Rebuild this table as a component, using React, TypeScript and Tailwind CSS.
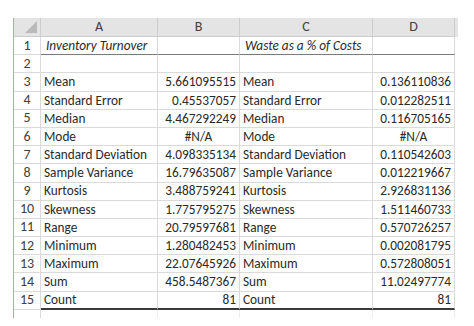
import React from "react";

const rows: [string, string, string, string][] = [
  ["Mean", "5.661095515", "Mean", "0.136110836"],
  ["Standard Error", "0.45537057", "Standard Error", "0.012282511"],
  ["Median", "4.467292249", "Median", "0.116705165"],
  ["Mode", "#N/A", "Mode", "#N/A"],
  ["Standard Deviation", "4.098335134", "Standard Deviation", "0.110542603"],
  ["Sample Variance", "16.79635087", "Sample Variance", "0.012219667"],
  ["Kurtosis", "3.488759241", "Kurtosis", "2.926831136"],
  ["Skewness", "1.775795275", "Skewness", "1.511460733"],
  ["Range", "20.79597681", "Range", "0.570726257"],
  ["Minimum", "1.280482453", "Minimum", "0.002081795"],
  ["Maximum", "22.07645926", "Maximum", "0.572808051"],
  ["Sum", "458.5487367", "Sum", "11.02497774"],
  ["Count", "81", "Count", "81"],
];

const cols = "grid grid-cols-[27px_117px_82px_133px_82px]";

function Cell({
  children,
  className = "",
}: {
  children?: React.ReactNode;
  className?: string;
}) {
  return (
    <div
      className={`h-[18.2px] flex items-center border-b border-r border-[#dadada] whitespace-nowrap overflow-visible ${className}`}
    >
      {children}
    </div>
  );
}

export default function App() {
  return (
    <div
      className="w-[474px] h-[326px] bg-white overflow-hidden pt-[18px] pl-[13px] text-[#2a2a2a] text-[13.3px] leading-none"
      style={{ fontFamily: "Calibri, Carlito, Lato, sans-serif" }}
    >
      <div className="w-[441px] border-l border-[#9fb39f]">
        {/* header */}
        <div className={`${cols} h-[19px] bg-[#e4e4e4] text-[#404040] text-[14px] w-[444px]`}>
          <div className="relative border-r border-b border-[#cccccc]">
            <svg
              className="absolute right-[3px] bottom-[3px]"
              width="12"
              height="12"
              viewBox="0 0 12 12"
            >
              <polygon points="12,0 12,12 0,12" fill="#bababa" />
            </svg>
          </div>
          {["A", "B", "C", "D"].map((c) => (
            <div
              key={c}
              className="flex items-center justify-center border-r border-b border-[#cccccc]"
            >
              {c}
            </div>
          ))}
        </div>
        {/* row 1 */}
        <div className={cols}>
          <Cell className="justify-center text-[#404040] text-[14px]">1</Cell>
          <Cell className="pl-[5px] italic border-b-[#7a7a7a]">
            Inventory Turnover
          </Cell>
          <Cell className="border-b-[#7a7a7a]" />
          <Cell className="pl-[5px] italic border-b-[#7a7a7a]">
            Waste as a % of Costs
          </Cell>
          <Cell className="border-b-[#7a7a7a]" />
        </div>
        {/* row 2 */}
        <div className={cols}>
          <Cell className="justify-center text-[#404040] text-[14px]">2</Cell>
          <Cell />
          <Cell />
          <Cell />
          <Cell />
        </div>
        {rows.map((r, i) => {
          const last = i === rows.length - 1;
          const bb = last ? "border-b-2 border-b-[#3a3a3a]" : "";
          const align = (v: string) =>
            v === "#N/A" ? "justify-center" : "justify-end pr-[3px]";
          return (
            <div key={i} className={cols}>
              <Cell className="justify-center text-[#404040] text-[14px]">{i + 3}</Cell>
              <Cell className={`pl-[3px] ${bb}`}>{r[0]}</Cell>
              <Cell className={`${align(r[1])} ${bb}`}>{r[1]}</Cell>
              <Cell className={`pl-[3px] ${bb}`}>{r[2]}</Cell>
              <Cell className={`${align(r[3])} ${bb}`}>{r[3]}</Cell>
            </div>
          );
        })}
        <div className={cols}>
          <div className="h-[8px] border-r border-[#dadada]" />
          <div className="h-[8px] border-r border-[#eeeeee]" />
          <div className="h-[8px] border-r border-[#eeeeee]" />
          <div className="h-[8px] border-r border-[#eeeeee]" />
          <div className="h-[8px] border-r border-[#eeeeee]" />
        </div>
      </div>
    </div>
  );
}
